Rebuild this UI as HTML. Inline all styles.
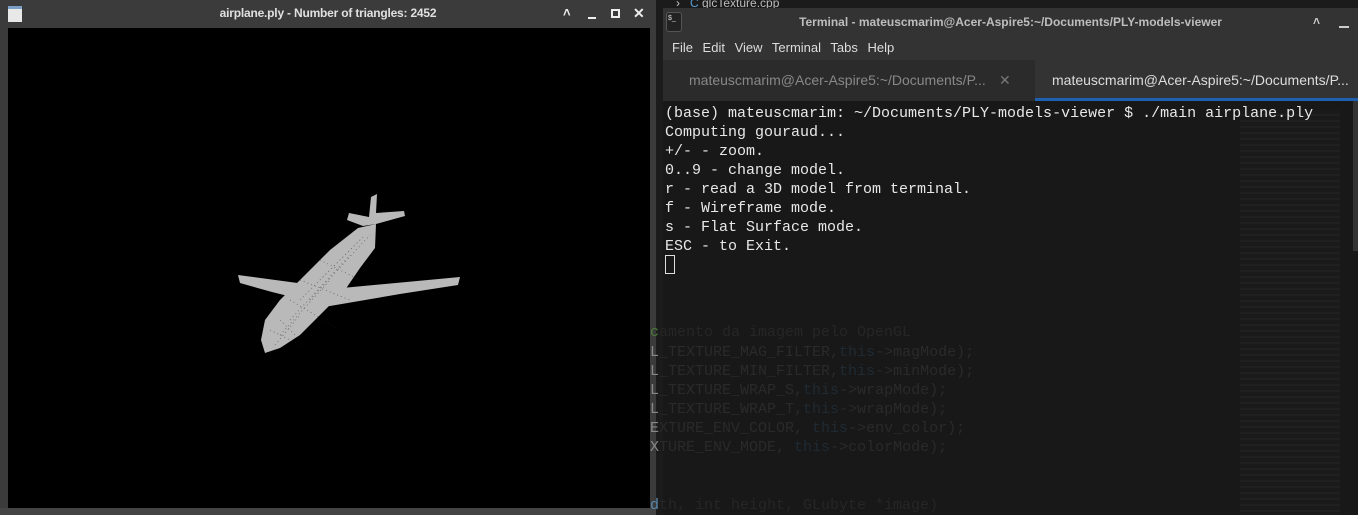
<!DOCTYPE html>
<html><head><meta charset="utf-8"><style>
*{margin:0;padding:0;box-sizing:border-box}
body{width:1358px;height:515px;overflow:hidden;background:#1e1e1e;position:relative;font-family:"Liberation Sans",sans-serif}
.abs{position:absolute}
.mono{font-family:"Liberation Mono","DejaVu Sans Mono",monospace}
.t{color:#1f2a33}
</style></head><body>
<div class="abs" style="left:650px;top:0;width:708px;height:8px;background:#1b1b1b"></div>
<div class="abs" style="left:676px;top:-4px;font-size:12px;color:#c8c8c8">›</div>
<div class="abs" style="left:690px;top:-4px;font-size:12px;color:#bbb"><span style="color:#5aa0d8">C</span> glcTexture.cpp</div>
<div class="abs" style="left:0;top:0;width:656px;height:515px;background:#3b3b3b"></div>
<div class="abs" style="left:8px;top:6px;width:14px;height:16px;background:#e8e8e8;border-top:3px solid #7ba0c8"></div>
<div class="abs" style="left:0;top:6px;width:656px;text-align:center;font-size:12px;font-weight:bold;color:#e0e0e0;letter-spacing:-0.2px">airplane.ply - Number of triangles: 2452</div>
<div class="abs" style="left:563px;top:5px;font-size:13px;color:#eee;font-weight:bold">˄</div>
<div class="abs" style="left:588px;top:17px;width:8px;height:2px;background:#eee"></div>
<div class="abs" style="left:611px;top:9px;width:9px;height:9px;border:2px solid #eee"></div>
<div class="abs" style="left:633px;top:5px;font-size:14px;color:#eee;font-weight:bold">✕</div>
<div class="abs" style="left:8px;top:28px;width:642px;height:480px;background:#000"></div>
<svg class="abs" style="left:0;top:0" width="656" height="515">
<g fill="#b9b9b9">
<polygon points="371,197 377,194 376,213 404,211 405,216 376,224 363,226 347,220 349,213 369,217"/>
<polygon points="358,228 376,224 375,248 360,268 345,290 320,315 300,335 280,348 265,353 261,340 265,320 280,300 305,275 330,250"/>
<polygon points="238,275 305,284 312,302 272,292 240,283"/>
<polygon points="310,291 460,277 458,285 400,294 330,306 306,306"/>
</g>
<g stroke="#222" stroke-width="0.8" opacity="0.55">
<path d="M300,300 L360,240 M290,320 L350,255 M280,335 L330,280 M310,300 L370,235 M275,345 L300,315 M320,280 L365,235" stroke-dasharray="1 3"/>
<path d="M290,300 L340,330 M300,280 L350,300 M320,260 L360,280 M280,320 L300,340 M270,330 L300,345" stroke-dasharray="1 3"/>
</g>
</svg>
<div class="abs" style="left:0;top:508px;width:656px;height:7px;background:#444"></div>
<div class="abs" style="left:656px;top:8px;width:7px;height:507px;background:#1b1b1b"></div>
<div class="abs" style="left:663px;top:8px;width:695px;height:507px;background:#181818"></div>
<div class="abs" style="left:663px;top:8px;width:695px;height:52px;background:#333"></div>
<div class="abs" style="left:666px;top:12px;width:16px;height:20px;background:#222;border:1px solid #555;border-radius:3px;color:#ddd;font-size:7px;padding:2px 1px">$_</div>
<div class="abs" style="left:663px;top:15px;width:695px;text-align:center;font-size:12px;font-weight:bold;color:#bdbdbd">Terminal - mateuscmarim@Acer-Aspire5:~/Documents/PLY-models-viewer</div>
<div class="abs" style="left:1313px;top:14px;font-size:12px;color:#ccc;font-weight:bold">˄</div>
<div class="abs" style="left:1339px;top:26px;width:10px;height:2px;background:#ccc"></div>
<div class="abs" style="left:672px;top:40px;font-size:13px;color:#ddd;word-spacing:6px">File Edit View Terminal Tabs Help</div>
<div class="abs" style="left:663px;top:60px;width:695px;height:41px;background:#2b2b2b"></div>
<div class="abs" style="left:1035px;top:60px;width:323px;height:41px;background:#333;border-bottom:3px solid #1f5fb0"></div>
<div class="abs" style="left:689px;top:72px;font-size:14px;color:#888">mateuscmarim@Acer-Aspire5:~/Documents/P...</div>
<div class="abs" style="left:999px;top:72px;font-size:14px;color:#777">✕</div>
<div class="abs" style="left:1052px;top:72px;font-size:14px;color:#ddd">mateuscmarim@Acer-Aspire5:~/Documents/P...</div>
<div class="abs mono" style="left:650px;top:324px;font-size:15px;color:#262626;white-space:pre"><span style="color:#4a7a3a">c</span>amento da imagem pelo OpenGL</div>
<div class="abs mono" style="left:650px;top:343px;font-size:15px;line-height:19px;color:#2a2a2a;white-space:pre"><span style="color:#888">L</span>_TEXTURE_MAG_FILTER,<span class="t">this</span>->magMode);
<span style="color:#888">L</span>_TEXTURE_MIN_FILTER,<span class="t">this</span>->minMode);
<span style="color:#888">L</span>_TEXTURE_WRAP_S,<span class="t">this</span>->wrapMode);
<span style="color:#888">L</span>_TEXTURE_WRAP_T,<span class="t">this</span>->wrapMode);
<span style="color:#888">E</span>XTURE_ENV_COLOR, <span class="t">this</span>->env_color);
<span style="color:#888">X</span>TURE_ENV_MODE, <span class="t">this</span>->colorMode);</div>
<div class="abs mono" style="left:650px;top:497px;font-size:15px;color:#262626;white-space:pre"><span style="color:#5a8ab0">d</span>th, int height, GLubyte *image)</div>
<div class="abs" style="left:1240px;top:110px;width:100px;height:405px;background:repeating-linear-gradient(#1a1a1a 0 4px,#202020 4px 6px)"></div>
<div class="abs" style="left:1353px;top:101px;width:5px;height:150px;background:#333"></div>
<div class="abs mono" style="left:665px;top:104px;font-size:15px;line-height:19px;color:#e8e8e8;white-space:pre">(base) mateuscmarim: ~/Documents/PLY-models-viewer $ ./main airplane.ply
Computing gouraud...
+/- - zoom.
0..9 - change model.
r - read a 3D model from terminal.
f - Wireframe mode.
s - Flat Surface mode.
ESC - to Exit.</div>
<div class="abs" style="left:665px;top:255px;width:10px;height:19px;border:1px solid #ddd"></div>
</body></html>
